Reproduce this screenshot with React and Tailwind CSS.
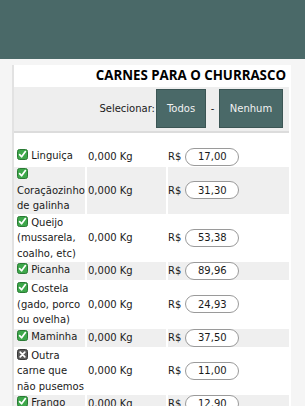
import React from "react";

const rows = [
  { name: ["Linguiça"], price: "17,00", on: true },
  { name: ["", "Coraçãozinho", "de galinha"], price: "31,30", on: true },
  { name: ["Queijo", "(mussarela,", "coalho, etc)"], price: "53,38", on: true },
  { name: ["Picanha"], price: "89,96", on: true },
  { name: ["Costela", "(gado, porco", "ou ovelha)"], price: "24,93", on: true },
  { name: ["Maminha"], price: "37,50", on: true },
  { name: ["Outra", "carne que", "não pusemos"], price: "11,00", on: false },
  { name: ["Frango"], price: "12,90", on: true },
];

function Check({ on }) {
  if (!on) {
    return (
      <svg width="11" height="11" viewBox="0 0 11 11" className="inline-block align-[-1px]">
        <rect x="0.5" y="0.5" width="10" height="10" rx="2" fill="#5a5a5a" stroke="#3a3a3a" />
        <path d="M3.2 3.2 L7.8 7.8 M7.8 3.2 L3.2 7.8" stroke="#fff" strokeWidth="1.7" strokeLinecap="round" />
      </svg>
    );
  }
  return (
    <svg width="11" height="11" viewBox="0 0 11 11" className="inline-block align-[-1px]">
      <rect x="0.5" y="0.5" width="10" height="10" rx="2" fill="#3da74a" stroke="#2b7a35" />
      <path d="M2.6 5.6 L4.6 7.8 L8.4 2.6" stroke="#fff" strokeWidth="1.7" fill="none" strokeLinecap="round" strokeLinejoin="round" />
    </svg>
  );
}

function Row({ row, gray }) {
  const bg = gray ? "bg-[#efefef]" : "bg-white";
  const [first, ...rest] = row.name;
  return (
    <div className="grid grid-cols-[71px_79px_1fr] gap-x-[2px]">
      <div className={`${bg} pl-[3px] whitespace-nowrap`}>
        <div>
          <Check on={row.on} /> {first}
        </div>
        {rest.map((l) => (
          <div key={l}>{l}</div>
        ))}
      </div>
      <div className={`${bg} pl-[1px] flex items-center whitespace-nowrap`}>0,000 Kg</div>
      <div className={`${bg} flex items-center gap-[4px]`}>
        <span>R$</span>
        <span className="w-[54px] h-[18px] rounded-full border border-[#9a9a9a] bg-white flex items-center justify-center">
          {row.price}
        </span>
      </div>
    </div>
  );
}

export default function App() {
  return (
    <div
      className="min-h-screen bg-[#f5f5f5] text-[#1a1a1a] text-[10px] leading-[15.5px]"
      style={{ fontFamily: '"DejaVu Sans", Verdana, sans-serif' }}
    >
      <div className="h-[59px] bg-[#4a6968]" />
      <div className="pl-3 pr-[14px] pt-[6px]">
        <div className="border-l-2 border-[#e2e2e2] bg-white pr-[2px]">
          <div
            className="h-[22px] flex items-center justify-end pr-[3px] text-[13.3px] font-bold text-black"
            style={{ fontFamily: '"Open Sans", sans-serif' }}
          >
            CARNES PARA O CHURRASCO
          </div>
          <div className="h-[46px] bg-[#eeeeee] border-b-2 border-[#dcdcdc] flex items-center justify-end pr-[6px] pb-[1px]">
            <span className="mr-[1px]">Selecionar:</span>
            <button className="w-[50px] h-[39px] bg-[#4a6968] border border-[#3b5554] text-[#f2f2f2]">Todos</button>
            <span className="w-[13px] text-center">-</span>
            <button className="w-[64px] h-[39px] bg-[#4a6968] border border-[#3b5554] text-[#f2f2f2]">Nenhum</button>
          </div>
          <div className="mt-[15px] flex flex-col gap-y-[1px]">
            {rows.map((r, i) => (
              <Row key={i} row={r} gray={i % 2 === 1} />
            ))}
          </div>
        </div>
      </div>
    </div>
  );
}
